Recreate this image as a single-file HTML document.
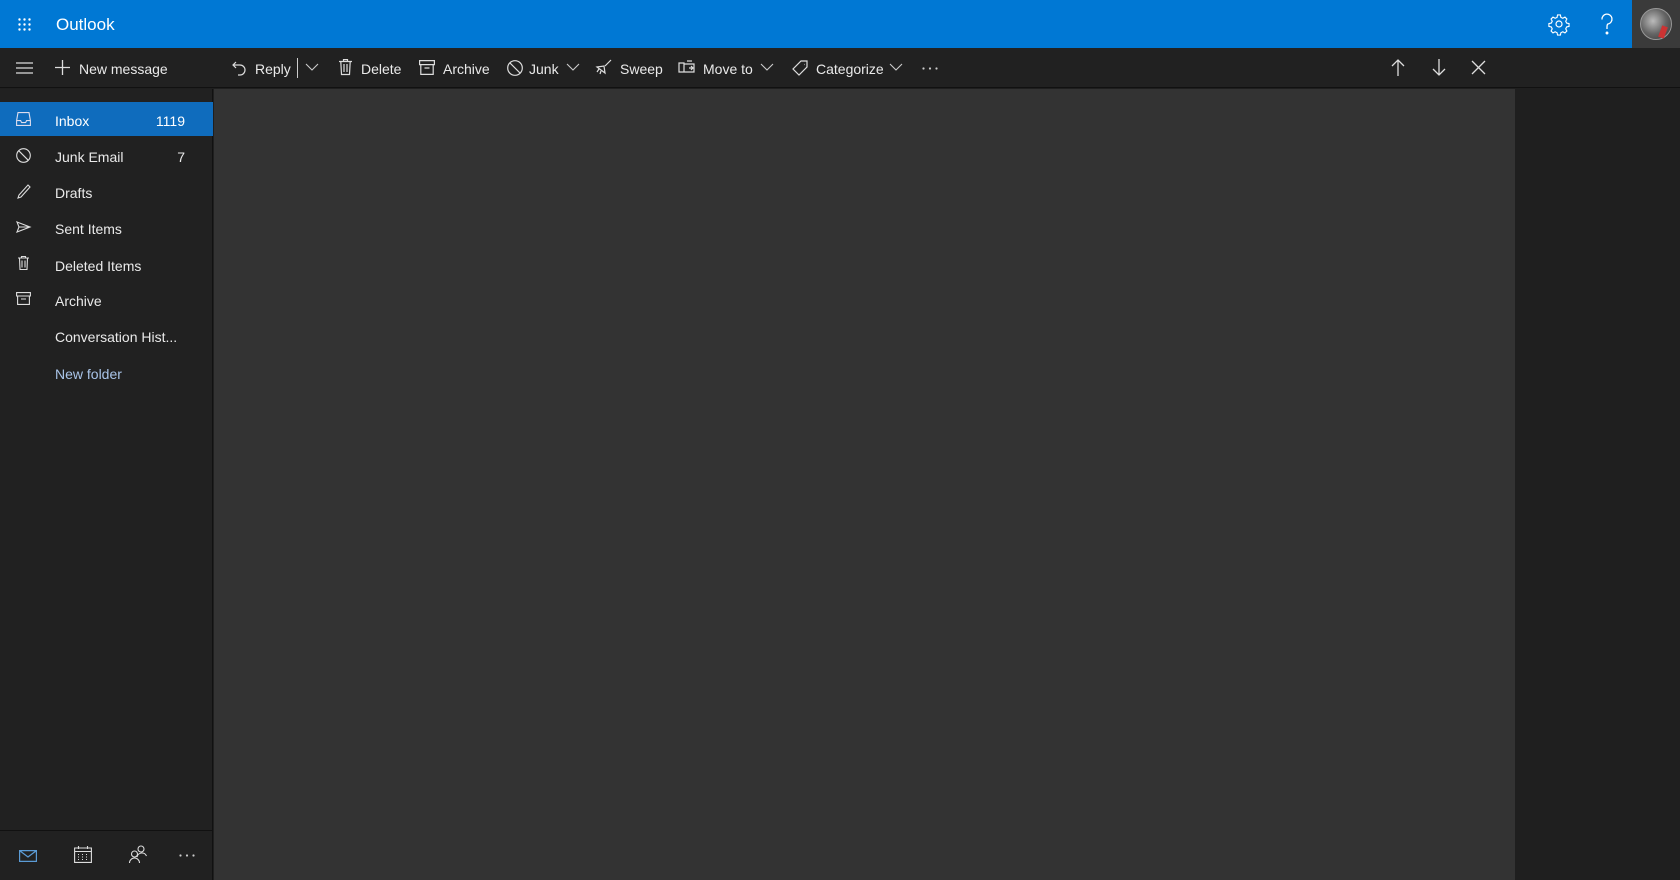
<!DOCTYPE html>
<html><head><meta charset="utf-8"><style>
*{margin:0;padding:0;box-sizing:border-box}
body{width:1680px;height:880px;overflow:hidden;background:#1f1f1f;font-family:"Liberation Sans",sans-serif;color:#fff;position:relative}
.a{position:absolute}
.hdr{left:0;top:0;width:1680px;height:48px;background:#0078d4}
.tb{left:0;top:48px;width:1680px;height:40px;background:#212121;border-bottom:1px solid #111}
.t{position:absolute;font-size:14px;color:#eaeaea;line-height:18px;white-space:nowrap}
svg{position:absolute;overflow:visible}
.side{left:0;top:89px;width:213px;height:791px;background:#212121;border-right:1px solid #111}
.pane{left:214px;top:89px;width:1301px;height:791px;background:#333}
.row{position:absolute;left:0;width:213px;height:34px}
</style></head><body>
<div class="a hdr"></div>
<svg style="left:18px;top:18px" width="13" height="13" fill="#fff"><circle cx="1.5" cy="1.5" r="1.2"/><circle cx="6.5" cy="1.5" r="1.2"/><circle cx="11.5" cy="1.5" r="1.2"/><circle cx="1.5" cy="6.5" r="1.2"/><circle cx="6.5" cy="6.5" r="1.2"/><circle cx="11.5" cy="6.5" r="1.2"/><circle cx="1.5" cy="11.5" r="1.2"/><circle cx="6.5" cy="11.5" r="1.2"/><circle cx="11.5" cy="11.5" r="1.2"/></svg>
<div class="t" style="left:56px;top:15px;font-size:17px;color:#fff;line-height:20px">Outlook</div>
<svg style="left:1549px;top:14px" width="20" height="20" fill="none" stroke="#fff" stroke-width="1.2"><circle cx="10" cy="10" r="3"/><path d="M8.5 1.5h3l.5 2.5 2 1 2.3-1.2 2 2-1.2 2.3 1 2 2.5.5v3l-2.5.5-1 2 1.2 2.3-2 2-2.3-1.2-2 1-.5 2.5h-3l-.5-2.5-2-1-2.3 1.2-2-2 1.2-2.3-1-2-2.5-.5v-3l2.5-.5 1-2-1.2-2.3 2-2 2.3 1.2 2-1z" transform="scale(.95) translate(.5 -.5)"/></svg>
<svg style="left:1600px;top:14px" width="14" height="22" fill="none" stroke="#fff" stroke-width="1.3"><path d="M2 5.5a5 5 0 1 1 6 4.5c-1 .4-1 1.5-1 3v2"/><circle cx="7" cy="19" r=".8" fill="#fff"/></svg>
<div class="a" style="left:1632px;top:0;width:48px;height:48px;background:#3a3a3a"></div>
<div class="a" style="left:1640px;top:8px;width:32px;height:32px;border-radius:50%;background:radial-gradient(circle at 40% 40%,#bbb,#666 50%,#333);border:1px solid #999"></div>
<div class="a" style="left:1660px;top:26px;width:6px;height:12px;background:#c33;transform:rotate(20deg)"></div>

<div class="a tb"></div>
<svg style="left:16px;top:62px" width="17" height="12" stroke="#ddd" stroke-width="1.2"><path d="M0 1h17M0 6h17M0 11h17"/></svg>
<svg style="left:55px;top:60px" width="15" height="15" stroke="#ddd" stroke-width="1.3"><path d="M7.5 0v15M0 7.5h15"/></svg>
<div class="t" style="left:79px;top:60px">New message</div>
<svg style="left:232px;top:61px" width="14" height="14" fill="none" stroke="#ddd" stroke-width="1.2"><path d="M4 1L1 4l3 3M1 4h7a5 5 0 0 1 0 10H6"/></svg>
<div class="t" style="left:255px;top:60px">Reply</div>
<div class="a" style="left:297px;top:58px;width:1px;height:20px;background:#ccc"></div>
<svg style="left:306px;top:64px" width="12" height="7" fill="none" stroke="#ccc" stroke-width="1.1"><path d="M0 0l6 6 6-6"/></svg>
<svg style="left:339px;top:59px" width="13" height="16" fill="none" stroke="#ddd" stroke-width="1.2"><path d="M0 2.5h13M4.5 2.5V.6h4v1.9M1.8 2.5l.7 13h8l.7-13M5 5v8M8 5v8"/></svg>
<div class="t" style="left:361px;top:60px">Delete</div>
<svg style="left:419px;top:60px" width="16" height="15" fill="none" stroke="#ddd" stroke-width="1.2"><path d="M.6.6h14.8v4H.6zM1.8 4.6v9.8h12.4V4.6M5.5 8h5"/></svg>
<div class="t" style="left:443px;top:60px">Archive</div>
<svg style="left:507px;top:60px" width="16" height="16" fill="none" stroke="#ddd" stroke-width="1.2"><circle cx="8" cy="8" r="7.3"/><path d="M3 3l10 10"/></svg>
<div class="t" style="left:529px;top:60px">Junk</div>
<svg style="left:567px;top:64px" width="12" height="7" fill="none" stroke="#ccc" stroke-width="1.1"><path d="M0 0l6 6 6-6"/></svg>
<svg style="left:596px;top:59px" width="16" height="16" fill="none" stroke="#ddd" stroke-width="1.2"><path d="M15 1L9 7M1 8l7-1 1 7zM3 10l-2 3M5 12l-1 3"/></svg>
<div class="t" style="left:620px;top:60px">Sweep</div>
<svg style="left:678px;top:60px" width="17" height="14" fill="none" stroke="#ddd" stroke-width="1.2"><path d="M1 3h5v9H1zM6 4h10v8H6M9 1h5M11 8h4M13 6l2 2-2 2"/></svg>
<div class="t" style="left:703px;top:60px">Move to</div>
<svg style="left:761px;top:64px" width="12" height="7" fill="none" stroke="#ccc" stroke-width="1.1"><path d="M0 0l6 6 6-6"/></svg>
<svg style="left:792px;top:60px" width="16" height="16" fill="none" stroke="#ddd" stroke-width="1.2"><path d="M9 1h6v6l-8 8-6-6zM12 4.5h.5"/></svg>
<div class="t" style="left:816px;top:60px">Categorize</div>
<svg style="left:890px;top:64px" width="12" height="7" fill="none" stroke="#ccc" stroke-width="1.1"><path d="M0 0l6 6 6-6"/></svg>
<svg style="left:922px;top:67px" width="16" height="3" fill="#ccc"><circle cx="1.5" cy="1.5" r="1.1"/><circle cx="8" cy="1.5" r="1.1"/><circle cx="14.5" cy="1.5" r="1.1"/></svg>
<svg style="left:1391px;top:59px" width="14" height="17" fill="none" stroke="#ddd" stroke-width="1.3"><path d="M7 1v16M1 7l6-6 6 6"/></svg>
<svg style="left:1432px;top:59px" width="14" height="17" fill="none" stroke="#ddd" stroke-width="1.3"><path d="M7 0v16M1 10l6 6 6-6"/></svg>
<svg style="left:1472px;top:61px" width="13" height="13" fill="none" stroke="#ddd" stroke-width="1.3"><path d="M0 0l13 13M13 0L0 13"/></svg>

<div class="a side"></div>
<div class="a pane"></div>
<div class="row" style="top:102px;background:#0f6cbd"></div>
<svg style="left:16px;top:112px" width="15" height="14" fill="none" stroke="#dde" stroke-width="1.1"><path d="M2 .6h11l1.4 8v4.8H.6V8.6zM.6 8.6h4l1 2h4l1-2h4"/></svg>
<div class="t" style="left:55px;top:112px;color:#fff">Inbox</div>
<div class="t" style="left:150px;top:112px;width:35px;text-align:right;color:#fff">1119</div>
<svg style="left:16px;top:148px" width="15" height="15" fill="none" stroke="#ddd" stroke-width="1.1"><circle cx="7.5" cy="7.5" r="6.8"/><path d="M2.7 2.7l9.6 9.6"/></svg>
<div class="t" style="left:55px;top:148px">Junk Email</div>
<div class="t" style="left:150px;top:148px;width:35px;text-align:right">7</div>
<svg style="left:17px;top:184px" width="14" height="15" fill="none" stroke="#ddd" stroke-width="1.1"><path d="M11 1l2 2L4 13l-3 1 1-3z"/></svg>
<div class="t" style="left:55px;top:184px">Drafts</div>
<svg style="left:16px;top:221px" width="15" height="12" fill="none" stroke="#ddd" stroke-width="1.1"><path d="M1 1l13 5-13 5 2-5zM3 6h11"/></svg>
<div class="t" style="left:55px;top:220px">Sent Items</div>
<svg style="left:18px;top:256px" width="11" height="14" fill="none" stroke="#ddd" stroke-width="1.1"><path d="M0 2h11M3.5 2V.5h4V2M1.5 2l.5 11.5h7L9.5 2M4 4.5v7M7 4.5v7"/></svg>
<div class="t" style="left:55px;top:257px">Deleted Items</div>
<svg style="left:16px;top:292px" width="15" height="13" fill="none" stroke="#ddd" stroke-width="1.1"><path d="M.6.6h13.8v3.4H.6zM1.6 4v8.4h11.8V4M5 7h5"/></svg>
<div class="t" style="left:55px;top:292px">Archive</div>
<div class="t" style="left:55px;top:328px">Conversation Hist...</div>
<div class="t" style="left:55px;top:365px;color:#a9c4e8">New folder</div>

<div class="a" style="left:0;top:830px;width:213px;height:1px;background:#111"></div>
<svg style="left:19px;top:850px" width="18" height="12" fill="none" stroke="#5b9bd5" stroke-width="1.2"><path d="M.6.6h16.8v10.8H.6zM.6.6L9 7l8.4-6.4"/></svg>
<svg style="left:74px;top:846px" width="18" height="17" fill="none" stroke="#ddd" stroke-width="1.1"><path d="M.6 2h16.8v14.4H.6zM.6 5.5h16.8M4.5 0v3M13.5 0v3M4 8.5h1M8 8.5h1M12 8.5h1M4 11h1M8 11h1M12 11h1M4 13.5h1M8 13.5h1M12 13.5h1"/></svg>
<svg style="left:129px;top:845px" width="18" height="18" fill="none" stroke="#ddd" stroke-width="1.1"><circle cx="5.5" cy="9" r="3"/><path d="M.5 18a5 5 0 0 1 10 0"/><circle cx="12" cy="4" r="3"/><path d="M8 12a5 5 0 0 1 9.5-1"/></svg>
<svg style="left:179px;top:854px" width="16" height="3" fill="#ccc"><circle cx="1.5" cy="1.5" r="1.1"/><circle cx="8" cy="1.5" r="1.1"/><circle cx="14.5" cy="1.5" r="1.1"/></svg>
</body></html>
